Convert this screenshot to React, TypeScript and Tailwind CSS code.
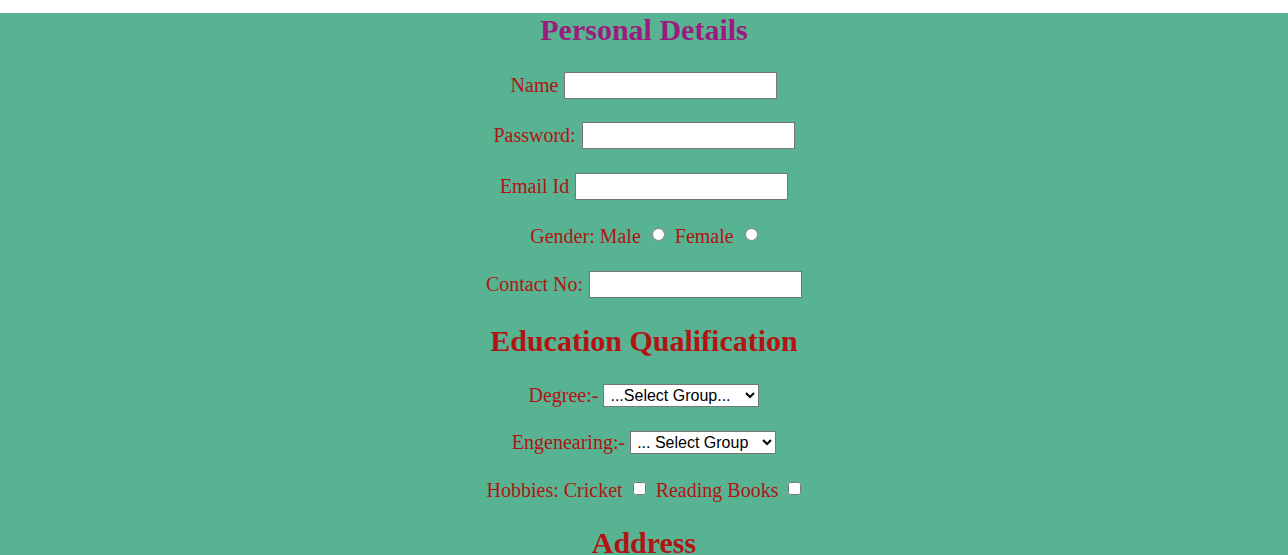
import React from 'react';

const serif = "font-['Liberation_Serif','Times_New_Roman',serif]";

const TextRow = ({ label, className = '' }: { label: string; className?: string }) => (
  <div className={`flex items-center justify-center gap-[6px] h-[27px] ${className}`}>
    <span className="text-[20px] text-[#b21414] leading-none -translate-y-[1px]">{label}</span>
    <input type="text" className="w-[213px] h-[27px] bg-white border border-[#767676] px-1" />
  </div>
);

export default function App() {
  return (
    <div className={`mt-[13px] bg-[#57b391] min-h-[542px] ${serif}`}>
      <h2 className="h-[34px] flex items-center justify-center text-[30px] font-bold text-[#9b1c7e] leading-none">
        Personal Details
      </h2>
      <TextRow label="Name" className="mt-[25px]" />
      <TextRow label="Password:" className="mt-[23px] gap-[5px]" />
      <TextRow label="Email Id" className="mt-[24px] gap-[5px]" />
      <div className="flex items-center justify-center h-[27px] mt-[23px] text-[20px] text-[#b21414]">
        <span className="-translate-y-[1px]">Gender: Male</span>
        <input type="radio" name="g" className="ml-[11px] mr-[10px] w-[13px] h-[13px] -translate-y-[2px]" />
        <span className="-translate-y-[1px]">Female</span>
        <input type="radio" name="g" className="ml-[11px] w-[13px] h-[13px] -translate-y-[2px]" />
      </div>
      <TextRow label="Contact No:" className="mt-[21px] gap-[5px]" />
      <h2 className="h-[34px] mt-[26px] flex items-center justify-center text-[30px] font-bold text-[#b21414] leading-none">
        Education Qualification
      </h2>
      <div className="flex items-center justify-center gap-[5px] h-[23px] mt-[26px]">
        <span className="text-[20px] text-[#b21414] -translate-y-[1px]">Degree:-</span>
        <select className="w-[156px] h-[23px] bg-white border border-[#767676] text-black text-[16px] font-['Liberation_Sans',Arial,sans-serif] pl-[2px]">
          <option>...Select Group...</option>
          <option>B.E.</option>
          <option>B.Tech</option>
        </select>
      </div>
      <div className="flex items-center justify-center gap-[5px] h-[23px] mt-[24px]">
        <span className="text-[20px] text-[#b21414] -translate-y-[1px]">Engenearing:-</span>
        <select className="w-[146px] h-[23px] bg-white border border-[#767676] text-black text-[16px] font-['Liberation_Sans',Arial,sans-serif] pl-[2px]">
          <option>... Select Group</option>
          <option>Computer</option>
          <option>Mechanical</option>
        </select>
      </div>
      <div className="flex items-center justify-center h-[26px] mt-[23px] text-[20px] text-[#b21414]">
        <span>Hobbies: Cricket</span>
        <input type="checkbox" className="ml-[10px] mr-[10px] w-[13px] h-[13px] -translate-y-[2px]" />
        <span>Reading Books</span>
        <input type="checkbox" className="ml-[10px] w-[13px] h-[13px] -translate-y-[2px]" />
      </div>
      <h2 className="h-[34px] mt-[23px] flex items-center justify-center text-[30px] font-bold text-[#b21414] leading-none">
        Address
      </h2>
    </div>
  );
}
